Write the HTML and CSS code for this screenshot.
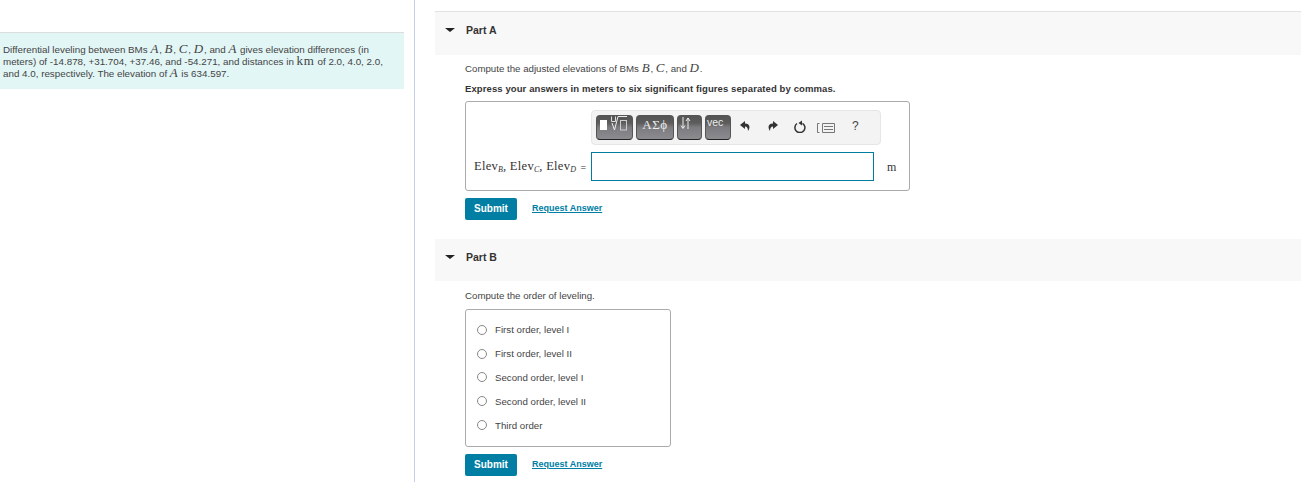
FILE: index.html
```html
<!DOCTYPE html>
<html lang="en">
<head>
  <meta charset="UTF-8" />
  <title>Part A and Part B</title>
  <link rel="stylesheet" href="styles.css">
</head>
<body>
  <div class="layout">
    <aside class="side">
      <div class="note">
        Differential leveling between BMs <i class="math">A</i>, <i class="math">B</i>, <i class="math">C</i>, <i class="math">D</i>, and <i class="math">A</i> gives elevation differences (in meters) of -14.878, +31.704, +37.46, and -54.271, and distances in <span class="math">km</span> of 2.0, 4.0, 2.0, and 4.0, respectively. The elevation of <i class="math">A</i> is 634.597.
      </div>
    </aside>

    <main class="main">
      <section class="part">
        <div class="part-head">
          <span class="caret"></span>
          <span class="part-title">Part A</span>
        </div>
        <div class="part-body">
          <p class="question">Compute the adjusted elevations of BMs <i class="math">B</i>, <i class="math">C</i>, and <i class="math">D</i>.</p>
          <p class="instruction">Express your answers in meters to six significant figures separated by commas.</p>

          <div class="answer-box">
            <div class="toolbar">
              <button class="tool tool-template">
                <span class="tool-square"></span>
                <svg class="tool-root" width="18" height="16" viewBox="0 0 18 16"><path d="M1.500 .5v5h4v-5" fill="none" stroke="#ddd"/><path d="M2 7l2.500 7 3.500-13.500h9" fill="none" stroke="#eee"/><rect x="10.500" y="4.500" width="6" height="9.500" fill="none" stroke="#ccc"/></svg>
              </button>
              <button class="tool tool-greek">ΑΣϕ</button>
              <button class="tool tool-arrows">
                <svg width="11" height="13" viewBox="0 0 11 13"><path d="M3 0v11M1 8.500l2 3 2-3M8 12V1M6 4l2-3 2 3" fill="none" stroke="#eee"/></svg>
              </button>
              <button class="tool tool-vec">vec</button>
              <svg class="action action-undo" width="10" height="10" viewBox="0 0 10 10"><path d="M5 0L0 4l5 4V5.500c2 0 3 1.500 3 4.500 2.500-3.500 2-7.500-3-7.500z" fill="#333"/></svg>
              <svg class="action action-redo" width="10" height="10" viewBox="0 0 10 10"><path d="M5 0l5 4-5 4V5.500c-2 0-3 1.500-3 4.500C-.5 6.500 0 2.500 5 2.500z" fill="#333"/></svg>
              <svg class="action action-reset" width="12" height="13" viewBox="0 0 12 13"><path d="M3 3.500a5 5 0 1 0 5.500 -.2" fill="none" stroke="#333" stroke-width="1.500"/><path d="M8 .5v5L4.500 3z" fill="#333"/></svg>
              <svg class="action action-keys" width="18" height="10" viewBox="0 0 18 10"><path d="M2.500 .5h-2v9h2M5.500 .5h12v9h-12z" fill="none" stroke="#777"/><path d="M7 3.500h9M7 6.500h9" stroke="#777"/></svg>
              <span class="help">?</span>
            </div>

            <div class="input-row">
              <span class="input-label">Elev<sub>B</sub>, Elev<sub>C</sub>, Elev<sub>D</sub> <span class="equals">=</span></span>
              <div class="answer-input"></div>
              <span class="unit">m</span>
            </div>
          </div>

          <div class="actions-row">
            <button class="submit">Submit</button>
            <a class="request" href="#">Request Answer</a>
          </div>
        </div>
      </section>

      <section class="part part-b">
        <div class="part-head">
          <span class="caret"></span>
          <span class="part-title">Part B</span>
        </div>
        <div class="part-body">
          <p class="question">Compute the order of leveling.</p>

          <div class="choices">
            <label class="choice"><span class="radio"></span>First order, level I</label>
            <label class="choice"><span class="radio"></span>First order, level II</label>
            <label class="choice"><span class="radio"></span>Second order, level I</label>
            <label class="choice"><span class="radio"></span>Second order, level II</label>
            <label class="choice"><span class="radio"></span>Third order</label>
          </div>

          <div class="actions-row">
            <button class="submit">Submit</button>
            <a class="request" href="#">Request Answer</a>
          </div>
        </div>
      </section>
    </main>
  </div>
</body>
</html>
```

FILE: styles.css
```css
* {
  box-sizing: border-box;
  margin: 0;
  padding: 0;
}

html, body {
  height: 100%;
  overflow: hidden;
}

body {
  font-family: 'Liberation Sans', Arial, sans-serif;
  font-size: 9.5px;
  color: #333;
  background: #fff;
}

.layout {
  display: flex;
  height: 482px;
}

.side {
  width: 415px;
  flex-shrink: 0;
  padding: 32px 10px 0 0;
  border-right: 1px solid #c3d0e8;
}

.note {
  height: 57px;
  padding: 11px 15px 0 3px;
  background: #e2f6f6;
  border-top: 1px solid #ddd;
  font-size: 9.8px;
  line-height: 12px;
  color: #444;
}

.math {
  font-family: 'Liberation Serif', serif;
  font-size: 13px;
  line-height: 0;
  letter-spacing: 0.8px;
}

.main {
  flex: 1;
  min-width: 0;
  padding: 11px 0 0 20px;
}

.part-b {
  margin-top: 19px;
}

.part-head {
  display: flex;
  align-items: center;
  height: 44px;
  padding: 0 0 8px 10px;
  background: #f8f8f8;
  border-top: 1px solid #e2e2e2;
}

.part-b .part-head {
  height: 42px;
  padding-bottom: 6px;
  border-top: none;
}

.caret {
  width: 0;
  height: 0;
  border-left: 5px solid transparent;
  border-right: 5px solid transparent;
  border-top: 4px solid #222;
}

.part-title {
  margin-left: 11px;
  font-weight: bold;
  font-size: 10.5px;
  color: #333;
}

.part-body {
  padding-left: 30px;
}

.question {
  padding-top: 7px;
  font-size: 9.7px;
  line-height: 14px;
  color: #444;
}

.part-b .question {
  padding-top: 8px;
}

.instruction {
  margin-top: 6px;
  line-height: 14px;
  font-weight: bold;
  color: #333;
  letter-spacing: 0.1px;
}

.answer-box {
  width: 445px;
  height: 90px;
  margin-top: 5px;
  padding: 8px 0 0 8px;
  border: 1px solid #aaa;
  border-radius: 3px;
}

.toolbar {
  display: flex;
  align-items: flex-start;
  width: 290px;
  height: 35px;
  margin-left: 117px;
  padding: 4px 0 0 4px;
  background: #f3f3f3;
  border: 1px solid #e6e6e6;
  border-radius: 4px;
}

.tool {
  display: flex;
  align-items: flex-start;
  flex-shrink: 0;
  height: 25px;
  margin-right: 3px;
  border: 1px solid #555;
  border-bottom-color: #222;
  border-radius: 4px;
  color: #eee;
  background: linear-gradient(#555 0, #5c5c5c 30%, #7c7c80 50%, #8b8b90 100%);
  font-family: 'Liberation Serif', serif;
  font-size: 13px;
  line-height: 18px;
}

.tool-template {
  width: 37px;
  padding-left: 3px;
}

.tool-square {
  width: 7px;
  height: 10px;
  margin-top: 4px;
  background: #fff;
}

.tool-root {
  margin-left: 3px;
}

.tool-greek {
  width: 38px;
  justify-content: center;
  letter-spacing: 0.6px;
}

.tool-arrows {
  width: 25px;
  padding: 1px 0 0 2px;
}

.tool-vec {
  width: 26px;
  padding-left: 1px;
  font-family: 'Liberation Sans', sans-serif;
  font-size: 10.5px;
  line-height: 13px;
}

.action {
  flex-shrink: 0;
  margin-top: 6px;
}

.action-undo { margin-left: 6px; }
.action-redo { margin-left: 18px; }
.action-reset { margin-left: 16px; margin-top: 5px; }
.action-keys { margin-left: 11px; margin-top: 8px; }

.help {
  margin-left: 17px;
  font-size: 12px;
  line-height: 22px;
  color: #444;
}

.input-row {
  display: flex;
  align-items: center;
  margin-top: 7px;
}

.input-label {
  width: 117px;
  font-family: 'Liberation Serif', serif;
  font-size: 12.5px;
  letter-spacing: 0.3px;
  white-space: nowrap;
  color: #333;
}

.input-label sub {
  font-size: 8px;
  font-style: italic;
  line-height: 0;
  letter-spacing: 0;
  vertical-align: -2px;
}

.equals {
  margin-left: 1px;
  font-family: 'Liberation Sans', sans-serif;
  font-size: 9.5px;
}

.answer-input {
  width: 283px;
  height: 29px;
  border: 1px solid #007c9f;
}

.unit {
  margin-left: 13px;
  padding-top: 2px;
  font-family: 'Liberation Serif', serif;
  font-size: 12px;
}

.actions-row {
  display: flex;
  align-items: center;
  margin-top: 7px;
}

.submit {
  width: 52px;
  height: 22px;
  padding-bottom: 1px;
  border: none;
  border-radius: 2px;
  background: #007ea3;
  color: #fff;
  font-family: 'Liberation Sans', sans-serif;
  font-size: 10px;
  font-weight: bold;
}

.request {
  margin-left: 15px;
  padding-bottom: 2px;
  font-size: 9px;
  font-weight: bold;
  color: #007ea3;
  text-decoration: underline;
}

.choices {
  width: 206px;
  height: 138px;
  margin-top: 6px;
  padding: 8px 0 0 11px;
  border: 1px solid #aaa;
  border-radius: 3px;
}

.choice {
  display: flex;
  align-items: center;
  height: 23.8px;
  color: #444;
  font-size: 9.7px;
}

.radio {
  width: 10px;
  height: 10px;
  margin-right: 8px;
  border: 1px solid #888;
  border-radius: 50%;
  background: #fff;
}
```
